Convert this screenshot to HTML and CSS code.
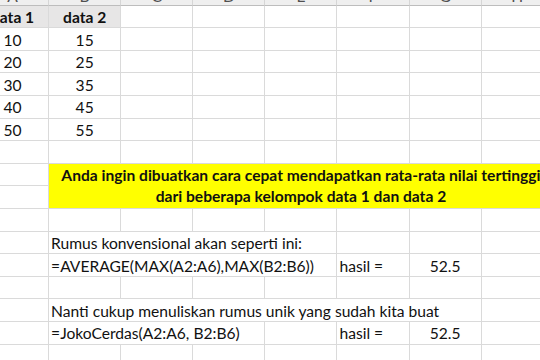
FILE: index.html
```html
<!DOCTYPE html>
<html lang="id">

<head>
    <meta charset="UTF-8">
    <meta name="viewport" content="width=device-width, initial-scale=1.0">
    <title>Rata-rata nilai tertinggi</title>
    <link rel="stylesheet" href="styles.css">
</head>

<body>
    <div class="sheet">
        <!-- column letters -->
        <div class="col-head"><span>A</span></div>
        <div class="col-head"><span>B</span></div>
        <div class="col-head"><span>C</span></div>
        <div class="col-head"><span>D</span></div>
        <div class="col-head"><span>E</span></div>
        <div class="col-head"><span>F</span></div>
        <div class="col-head"><span>G</span></div>
        <div class="col-head"><span>H</span></div>

        <!-- row 1 -->
        <div class="cell title center">data 1</div>
        <div class="cell title center">data 2</div>
        <div class="cell"></div><div class="cell"></div><div class="cell"></div><div class="cell"></div><div class="cell"></div><div class="cell"></div>

        <!-- rows 2-6 -->
        <div class="cell center">10</div><div class="cell center">15</div>
        <div class="cell"></div><div class="cell"></div><div class="cell"></div><div class="cell"></div><div class="cell"></div><div class="cell"></div>

        <div class="cell center">20</div><div class="cell center">25</div>
        <div class="cell"></div><div class="cell"></div><div class="cell"></div><div class="cell"></div><div class="cell"></div><div class="cell"></div>

        <div class="cell center">30</div><div class="cell center">35</div>
        <div class="cell"></div><div class="cell"></div><div class="cell"></div><div class="cell"></div><div class="cell"></div><div class="cell"></div>

        <div class="cell center">40</div><div class="cell center">45</div>
        <div class="cell"></div><div class="cell"></div><div class="cell"></div><div class="cell"></div><div class="cell"></div><div class="cell"></div>

        <div class="cell center">50</div><div class="cell center">55</div>
        <div class="cell"></div><div class="cell"></div><div class="cell"></div><div class="cell"></div><div class="cell"></div><div class="cell"></div>

        <!-- row 7 -->
        <div class="cell"></div><div class="cell"></div><div class="cell"></div><div class="cell"></div><div class="cell"></div><div class="cell"></div><div class="cell"></div><div class="cell"></div>

        <!-- rows 8-9, merged B8:H9 -->
        <div class="cell"></div>
        <div class="cell note">Anda ingin dibuatkan cara cepat mendapatkan rata-rata nilai tertinggi<br>dari beberapa kelompok data 1 dan data 2</div>
        <div class="cell"></div>

        <!-- row 10 -->
        <div class="cell"></div><div class="cell"></div><div class="cell"></div><div class="cell"></div><div class="cell"></div><div class="cell"></div><div class="cell"></div><div class="cell"></div>

        <!-- row 11 -->
        <div class="cell"></div>
        <div class="cell span-4">Rumus konvensional akan seperti ini:</div>
        <div class="cell"></div><div class="cell"></div><div class="cell"></div>

        <!-- row 12 -->
        <div class="cell"></div>
        <div class="cell span-4">=AVERAGE(MAX(A2:A6),MAX(B2:B6))</div>
        <div class="cell">hasil =</div>
        <div class="cell center">52.5</div>
        <div class="cell"></div>

        <!-- row 13 -->
        <div class="cell"></div><div class="cell"></div><div class="cell"></div><div class="cell"></div><div class="cell"></div><div class="cell"></div><div class="cell"></div><div class="cell"></div>

        <!-- row 14 -->
        <div class="cell"></div>
        <div class="cell span-6">Nanti cukup menuliskan rumus unik yang sudah kita buat</div>
        <div class="cell"></div>

        <!-- row 15 -->
        <div class="cell"></div>
        <div class="cell span-3">=JokoCerdas(A2:A6, B2:B6)</div>
        <div class="cell"></div>
        <div class="cell">hasil =</div>
        <div class="cell center">52.5</div>
        <div class="cell"></div>

        <!-- row 16 -->
        <div class="cell"></div><div class="cell"></div><div class="cell"></div><div class="cell"></div><div class="cell"></div><div class="cell"></div><div class="cell"></div><div class="cell"></div>
    </div>
</body>

</html>
```
FILE: styles.css
```css
body {
    margin: 0;
    background: #ffffff;
    color: #111111;
    font-family: Lato, 'Open Sans', sans-serif;
    font-size: 15.6px;
    overflow: hidden;
    height: 360px;
}

.sheet {
    display: grid;
    grid-template-columns: repeat(8, 72.1px);
    grid-template-rows: 5.7px repeat(16, 22.6px);
    margin-left: -23px;
    width: max-content;
}

.col-head {
    background: #efefef;
    border-right: 1px solid #d6d6d6;
    border-bottom: 1px solid #bdbdbd;
    box-sizing: border-box;
    overflow: hidden;
    text-align: center;
    color: #505050;
}

.col-head span {
    display: block;
    line-height: 16px;
    margin-top: -12px;
}

.cell {
    box-sizing: border-box;
    border-right: 1px solid #dadada;
    border-bottom: 1px solid #dadada;
    display: flex;
    align-items: flex-end;
    padding: 0 2px 0.5px;
    white-space: nowrap;
    line-height: 1.2;
}

.center {
    justify-content: center;
}

.title {
    background: #e7e6e6;
    font-weight: bold;
}

.span-3 {
    grid-column: span 3;
}

.span-4 {
    grid-column: span 4;
}

.span-6 {
    grid-column: span 6;
}

.note {
    grid-column: span 7;
    grid-row: span 2;
    background: #ffff00;
    justify-content: center;
    text-align: center;
    font-weight: bold;
    line-height: 21.7px;
    padding: 0;
}
```
